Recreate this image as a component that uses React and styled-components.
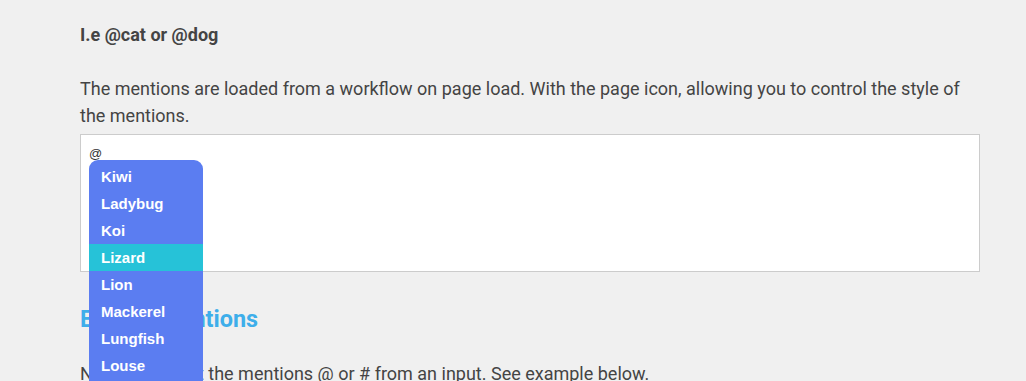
import React from "react";
import styled, { createGlobalStyle } from "styled-components";

const Global = createGlobalStyle`
  html, body { margin: 0; padding: 0; background: #f0f0f0; }
  body { font-family: Roboto, "Liberation Sans", sans-serif; color: #444; }
  * { box-sizing: border-box; }
`;

const Page = styled.div`
  width: 1026px;
  height: 381px;
  overflow: hidden;
  padding: 22px 46px 0 80px;
`;

const Lead = styled.p`
  margin: 0;
  font-size: 18px;
  font-weight: 700;
  line-height: 26px;
  color: #444;
`;

const Para = styled.p`
  margin: ${(p) => p.$mt || 0}px 0 0;
  font-size: 18px;
  line-height: 27px;
  color: #444;
`;

const Editor = styled.div`
  position: relative;
  margin-top: 5px;
  height: 138px;
  background: #fff;
  border: 1px solid #cccccc;
  padding: 11px 8px 8px;
  font-family: "Liberation Sans", Arial, sans-serif;
  font-size: 13px;
  line-height: 16px;
  color: #333;
`;

const Menu = styled.ul`
  position: absolute;
  left: 8px;
  top: 25px;
  z-index: 2;
  width: 114px;
  margin: 0;
  padding: 3px 0 0;
  list-style: none;
  background: #5b7df1;
  border-radius: 9px 9px 0 0;
`;

const Item = styled.li`
  height: 27px;
  line-height: 27px;
  padding-left: 12px;
  font-family: "Liberation Sans", Arial, sans-serif;
  font-weight: 700;
  font-size: 15px;
  color: #fff;
  background: ${(p) => (p.$active ? "#26c2d8" : "transparent")};
`;

const Heading = styled.h2`
  margin: 32px 0 0;
  font-size: 23.4px;
  font-weight: 700;
  line-height: 30px;
  color: #3eaeea;
`;

const items = ["Kiwi", "Ladybug", "Koi", "Lizard", "Lion", "Mackerel", "Lungfish", "Louse", "Llama"];

export default function App() {
  return (
    <>
      <Global />
      <Page>
        <Lead>I.e @cat or @dog</Lead>
        <Para $mt={27}>
          The mentions are loaded from a workflow on page load. With the page icon, allowing you to control the style of
          the mentions.
        </Para>
        <Editor>
          @
          <Menu>
            {items.map((it) => (
              <Item key={it} $active={it === "Lizard"}>
                {it}
              </Item>
            ))}
          </Menu>
        </Editor>
        <Heading>Extract mentions</Heading>
        <Para $mt={26}>Now we extract the mentions @ or # from an input. See example below.</Para>
      </Page>
    </>
  );
}
